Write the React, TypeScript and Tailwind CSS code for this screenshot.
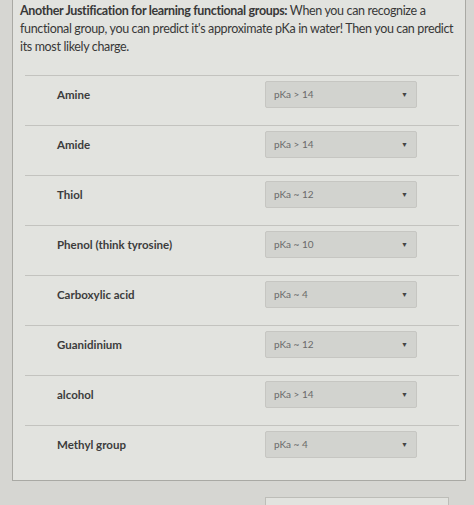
import React from "react";

const rows: [string, string][] = [
  ["Amine", "pKa > 14"],
  ["Amide", "pKa > 14"],
  ["Thiol", "pKa ~ 12"],
  ["Phenol (think tyrosine)", "pKa ~ 10"],
  ["Carboxylic acid", "pKa ~ 4"],
  ["Guanidinium", "pKa ~ 12"],
  ["alcohol", "pKa > 14"],
  ["Methyl group", "pKa ~ 4"],
];

export default function App() {
  return (
    <div className="w-[474px] h-[505px] overflow-hidden bg-[#d6d6d2] text-[#333] [font-family:Lato,'Open_Sans',sans-serif]">
      <div className="ml-[12px] mr-[8px] h-[481px] border-l border-r border-b border-[#a9a9a4] bg-[#e2e3df]">
        <p className="pl-[7px] pr-[4px] pt-[2px] text-[12.5px] leading-[18px] tracking-[-0.35px] text-[#383838] whitespace-nowrap">
          <span className="font-bold">Another Justification for learning functional groups:</span> When you can recognize a
          <br />
          functional group, you can predict it's approximate pKa in water! Then you can predict
          <br />
          its most likely charge.
        </p>
        <div className="mt-[19px] ml-[12px] mr-[6px]">
          {rows.map(([label, val], i) => (
            <div key={i} className="flex items-start h-[50px] pt-[5px] border-t border-[#c3c3bf]">
              <div className="w-[240px] pl-[32px] pt-[7px] text-[11.5px] leading-[14px] font-bold text-[#3c3c3c]">{label}</div>
              <div className="flex items-center justify-between w-[152px] h-[27px] px-[8px] rounded-[2px] border border-[#c6c6c2] bg-[#d2d3cf] text-[10px] text-[#6a6a6a]">
                <span>{val}</span>
                <span className="text-[7px] text-[#444]">▼</span>
              </div>
            </div>
          ))}
        </div>
      </div>
      <div className="mt-[16px] ml-[265px] w-[184px] h-[12px] border border-[#bdbdb8] bg-[#e2e3df]" />
    </div>
  );
}
